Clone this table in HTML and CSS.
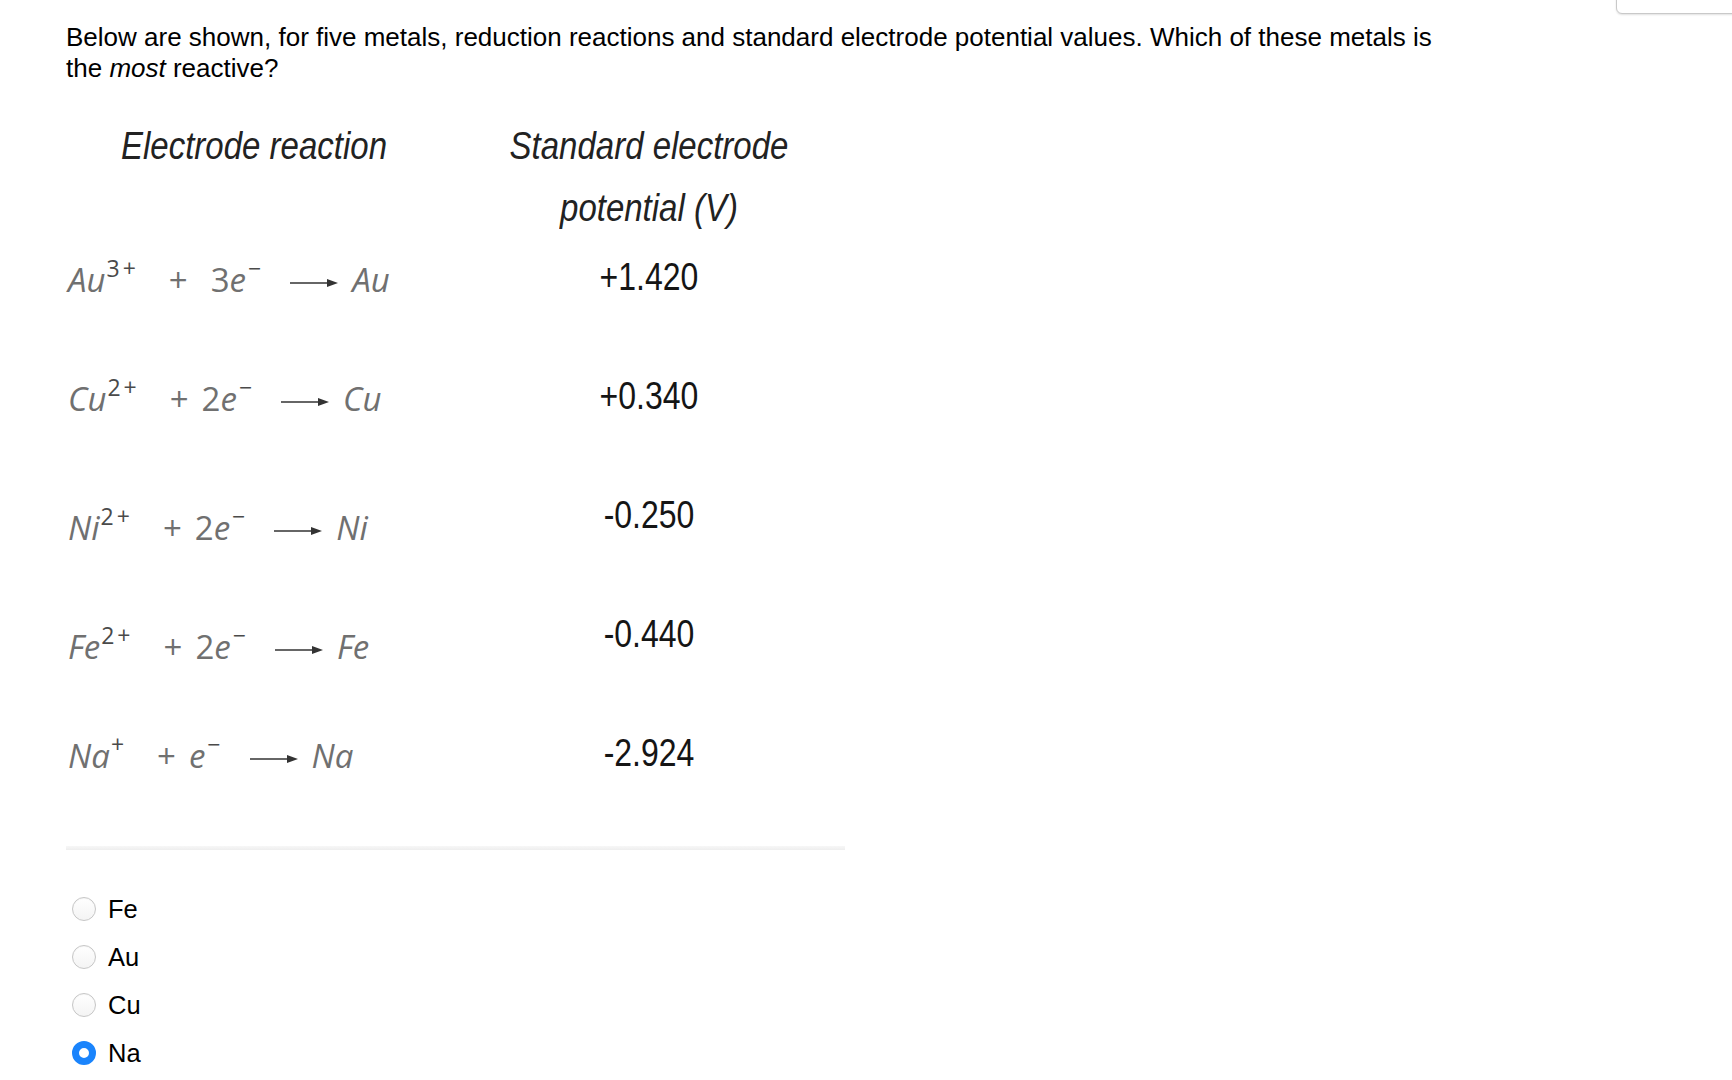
FILE: index.html
```html
<!DOCTYPE html>
<html lang="en">
<head>
<meta charset="utf-8">
<title>Question</title>
<link rel="stylesheet" href="styles.css">
</head>
<body>
<div class="page">
  <div class="corner-box"></div>
  <p class="intro">Below are shown, for five metals, reduction reactions and standard electrode potential values. Which of these metals is the <em>most</em> reactive?</p>

  <div class="table">
    <div class="thead">
      <div class="cell c1"><span class="th">Electrode reaction</span></div>
      <div class="cell c2"><span class="th">Standard electrode</span><span class="th">potential (V)</span></div>
    </div>

    <div class="trow">
      <div class="cell c1"><div class="eq up"><i>Au</i><sup>3+</sup><span class="op">+</span><span class="n">3</span><i>e</i><sup class="m">−</sup><svg class="arrow" viewBox="0 0 48 12" width="48" height="12"><line x1="0" y1="6" x2="40" y2="6"/><polygon points="37,2 48,6 37,10"/></svg><i>Au</i></div></div>
      <div class="cell c2"><span class="val">+1.420</span></div>
    </div>

    <div class="trow">
      <div class="cell c1"><div class="eq up tight"><i>Cu</i><sup>2+</sup><span class="op">+</span><span class="n">2</span><i>e</i><sup class="m">−</sup><svg class="arrow" viewBox="0 0 48 12" width="48" height="12"><line x1="0" y1="6" x2="40" y2="6"/><polygon points="37,2 48,6 37,10"/></svg><i>Cu</i></div></div>
      <div class="cell c2"><span class="val">+0.340</span></div>
    </div>

    <div class="trow">
      <div class="cell c1"><div class="eq down tight"><i>Ni</i><sup>2+</sup><span class="op">+</span><span class="n">2</span><i>e</i><sup class="m">−</sup><svg class="arrow" viewBox="0 0 48 12" width="48" height="12"><line x1="0" y1="6" x2="40" y2="6"/><polygon points="37,2 48,6 37,10"/></svg><i>Ni</i></div></div>
      <div class="cell c2"><span class="val">-0.250</span></div>
    </div>

    <div class="trow">
      <div class="cell c1"><div class="eq down tight"><i>Fe</i><sup>2+</sup><span class="op">+</span><span class="n">2</span><i>e</i><sup class="m">−</sup><svg class="arrow" viewBox="0 0 48 12" width="48" height="12"><line x1="0" y1="6" x2="40" y2="6"/><polygon points="37,2 48,6 37,10"/></svg><i>Fe</i></div></div>
      <div class="cell c2"><span class="val">-0.440</span></div>
    </div>

    <div class="trow">
      <div class="cell c1"><div class="eq up tight"><i>Na</i><sup>+</sup><span class="op">+</span><i>e</i><sup class="m">−</sup><svg class="arrow" viewBox="0 0 48 12" width="48" height="12"><line x1="0" y1="6" x2="40" y2="6"/><polygon points="37,2 48,6 37,10"/></svg><i>Na</i></div></div>
      <div class="cell c2"><span class="val">-2.924</span></div>
    </div>
  </div>

  <div class="sep"></div>

  <ul class="options">
    <li><label><input type="radio" name="ans"><span>Fe</span></label></li>
    <li><label><input type="radio" name="ans"><span>Au</span></label></li>
    <li><label><input type="radio" name="ans"><span>Cu</span></label></li>
    <li><label><input type="radio" name="ans" checked><span>Na</span></label></li>
  </ul>
</div>
</body>
</html>
```

FILE: styles.css
```css
* { box-sizing: border-box; }
html, body { margin: 0; padding: 0; background: #fff; }
body {
  font-family: "Liberation Sans", Arial, Helvetica, sans-serif;
  color: #000;
  overflow: hidden;
}
.page {
  position: relative;
  padding: 22px 0 0 66px;
  width: 1732px;
  height: 1080px;
}
.corner-box {
  position: absolute;
  top: -12px;
  right: -12px;
  width: 128px;
  height: 26px;
  border: 1px solid #c9c9c9;
  border-radius: 6px;
  background: #fff;
  box-shadow: 0 1px 2px rgba(0,0,0,0.12);
}
.intro {
  margin: 0;
  width: 1385px;
  font-size: 26px;
  line-height: 31px;
}
.intro em { font-style: italic; }

.table {
  margin-top: 31px;
  width: 790px;
}
.thead, .trow {
  display: grid;
  grid-template-columns: 376px 414px;
}
.thead { height: 124px; }
.trow { height: 119px; }
.cell.c2 {
  display: flex;
  flex-direction: column;
  align-items: center;
}
.thead .c1 { text-align: center; }
.th {
  display: block;
  font-style: italic;
  font-size: 33px;
  line-height: 62px;
  color: #222;
  transform: scaleY(1.17);
}
.val {
  display: block;
  font-size: 32px;
  line-height: 40px;
  margin-top: 18px;
  color: #151515;
  transform: scaleY(1.2);
}

.eq {
  display: flex;
  align-items: baseline;
  padding-left: 2px;
  font-family: "Open Sans", "DejaVu Sans", sans-serif;
  font-size: 33px;
  line-height: 40px;
  color: #707070;
}
.eq.up { margin-top: 21px; }
.eq.down { margin-top: 31px; }
.eq i { font-style: italic; }
.eq sup {
  font-size: 23px;
  line-height: 1;
  letter-spacing: 3px;
  position: relative;
  top: -15px;
  vertical-align: baseline;
  margin-left: 1px;
  color: #4a4a4a;
}
.eq sup.m { margin-left: 2px; margin-right: 29px; letter-spacing: 0; }
.eq .op { margin: 0 23px 0 30px; }
.eq.tight .op { margin-right: 13px; }
.arrow {
  align-self: center;
  margin-right: 14px;
  margin-top: 6px;
}
.arrow line { stroke: #333; stroke-width: 1.6; }
.arrow polygon { fill: #333; }

.sep {
  margin-top: 12px;
  width: 779px;
  height: 4px;
  background: linear-gradient(#f7f7f7, #eeeeee);
}

.options {
  list-style: none;
  margin: 35px 0 0 0;
  padding: 0;
}
.options li { height: 48px; }
.options label {
  display: flex;
  align-items: center;
  height: 48px;
  gap: 12px;
  font-size: 25.5px;
}
.options input {
  appearance: none;
  -webkit-appearance: none;
  margin: 0 0 0 6px;
  width: 24px;
  height: 24px;
  border-radius: 50%;
  border: 1px solid #c6c6c6;
  background: linear-gradient(#ffffff, #f4f4f4);
  box-shadow: inset 0 1px 1px rgba(0,0,0,0.04);
}
.options input:checked {
  border: 7px solid #1a84fc;
  background: #fff;
  box-shadow: none;
}
```
